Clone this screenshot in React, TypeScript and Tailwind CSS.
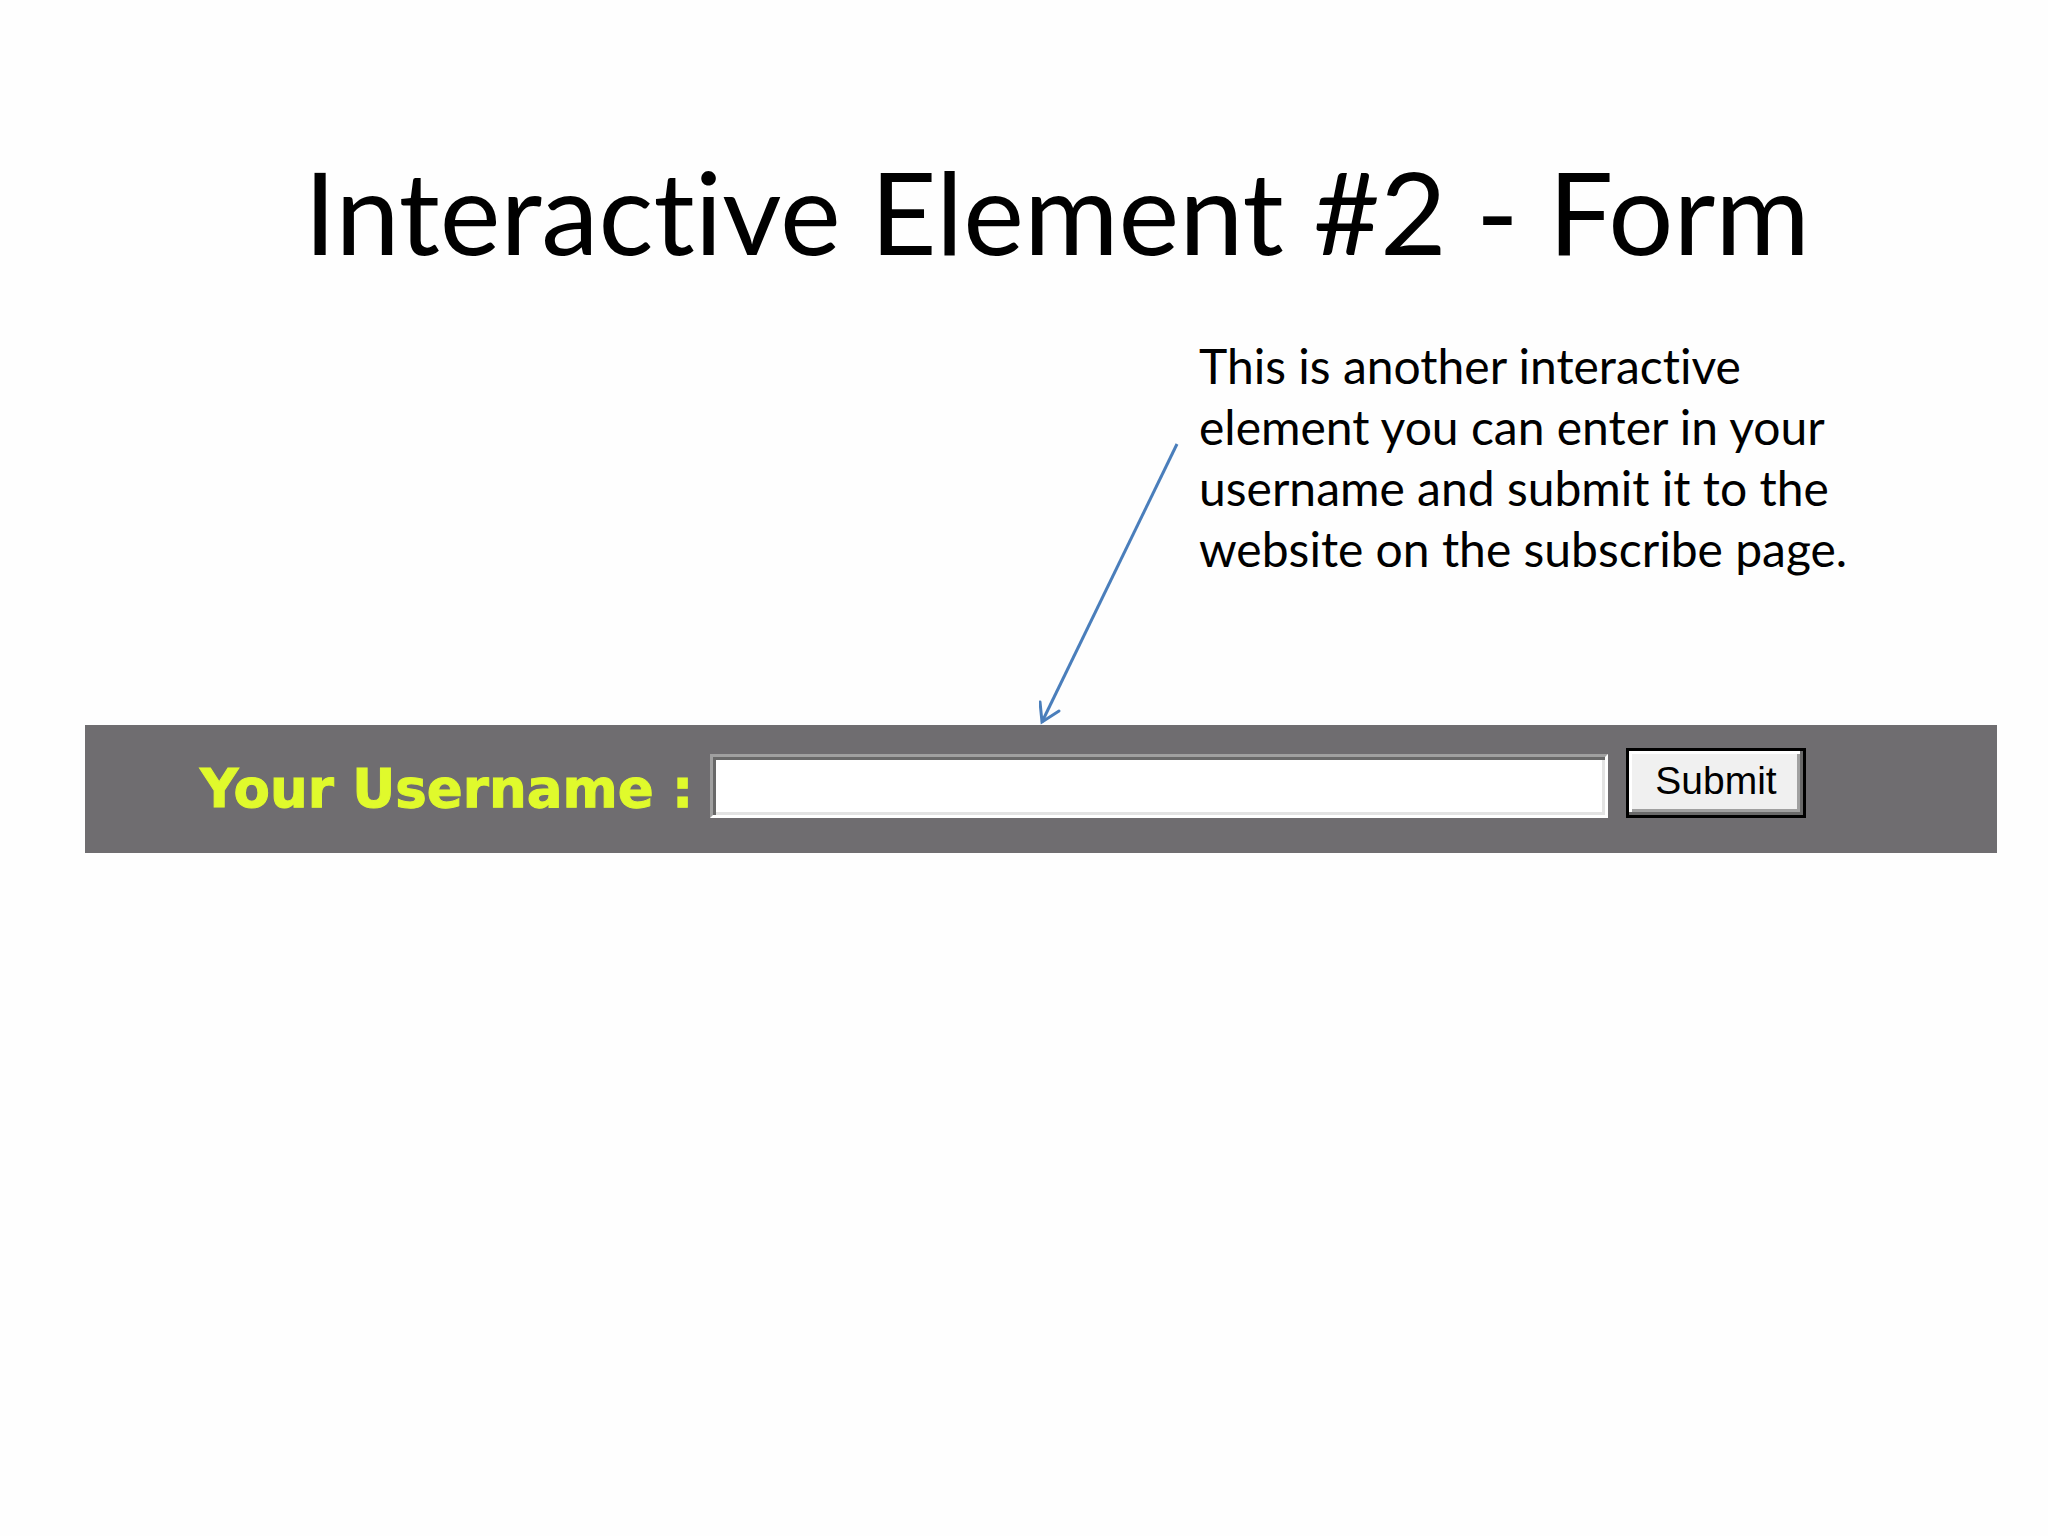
export default function App() {
  return (
    <main className="min-h-screen bg-[#fefefe] font-['Lato',sans-serif] text-black [font-variant-ligatures:none]">
      <h1 className="pt-[138px] pl-[66px] text-center text-[115px] leading-[144px]">
        Interactive Element #2 - Form
      </h1>

      <div className="mt-[53px] flex justify-end gap-[20px] pr-[184px]">
        <svg
          className="mt-[107px] shrink-0"
          width="140"
          height="283"
          viewBox="0 0 140 283"
          fill="none"
          stroke="#4a7ebb"
          strokeWidth="3"
          aria-hidden="true"
        >
          <path d="M138 2L3 280" />
          <path d="M1 260L3 280L20 269" strokeLinecap="round" />
        </svg>
        <p className="w-[665px] text-[48px] leading-[61px]">
          This is another interactive element you can enter in your username and submit it to the
          website on the subscribe page.
        </p>
      </div>

      <form
        className="mr-[51px] ml-[85px] flex h-[128px] items-start bg-[#6f6d70] pr-[191px] pl-[115px]"
        onSubmit={(e) => e.preventDefault()}
      >
        <label
          htmlFor="username"
          className="mt-[34px] w-[510px] shrink-0 font-['DejaVu_Sans',sans-serif] text-[53px] leading-[60px] font-bold whitespace-nowrap text-[#e0fa2c] [-webkit-text-stroke:1px_#e0fa2c]"
        >
          Your Username :
        </label>
        <input
          id="username"
          type="text"
          className="mt-[29px] h-[64px] min-w-0 flex-1 border-[3px] border-t-[#a0a0a0] border-r-white border-b-white border-l-[#a0a0a0] bg-white px-3 font-['Liberation_Sans',sans-serif] text-[38px] text-black shadow-[inset_3px_3px_0_#696969,inset_-3px_-3px_0_#e3e3e3] outline-none"
        />
        <button
          type="submit"
          className="mt-[23px] ml-[18px] h-[70px] w-[180px] shrink-0 border-[3px] border-black bg-[#f0f0f0] pb-[4px] font-['Liberation_Sans',sans-serif] text-[39px] leading-[60px] text-black shadow-[inset_-3px_-3px_0_#696969,inset_3px_3px_0_#ffffff,inset_-6px_-6px_0_#a0a0a0]"
        >
          Submit
        </button>
      </form>
    </main>
  );
}
